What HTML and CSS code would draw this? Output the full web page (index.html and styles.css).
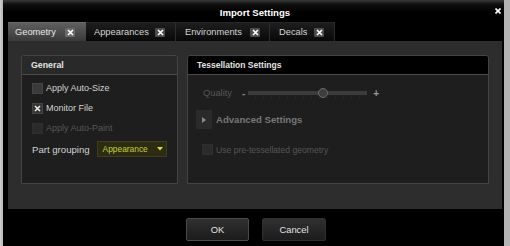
FILE: index.html
```html
<!DOCTYPE html>
<html>
<head>
<meta charset="utf-8">
<link rel="stylesheet" href="styles.css">
</head>
<body>
<div class="dialog">
  <div class="titlebar">
    <span></span>
    <span class="title">Import Settings</span>
    <span class="close"><svg width="6" height="6" viewBox="0 0 6 6"><path d="M0.5 0.5L5.5 5.5M5.5 0.5L0.5 5.5" stroke="#fff" stroke-width="1.6"/></svg></span>
  </div>
  <div class="tabs">
    <div class="tab active t-geo"><span>Geometry</span><span class="tx"><svg width="7" height="7" viewBox="0 0 7 7"><path d="M1 1L6 6M6 1L1 6" stroke="#fff" stroke-width="1.6"/></svg></span></div>
    <div class="tab t-app"><span>Appearances</span><span class="tx"><svg width="7" height="7" viewBox="0 0 7 7"><path d="M1 1L6 6M6 1L1 6" stroke="#fff" stroke-width="1.6"/></svg></span></div>
    <div class="tab t-env"><span>Environments</span><span class="tx"><svg width="7" height="7" viewBox="0 0 7 7"><path d="M1 1L6 6M6 1L1 6" stroke="#fff" stroke-width="1.6"/></svg></span></div>
    <div class="tab t-dec"><span>Decals</span><span class="tx"><svg width="7" height="7" viewBox="0 0 7 7"><path d="M1 1L6 6M6 1L1 6" stroke="#fff" stroke-width="1.6"/></svg></span></div>
  </div>
  <div class="panel">
    <div class="group general">
      <div class="ghead">General</div>
      <div class="gbody">
        <div class="row"><span class="cb"></span><span>Apply Auto-Size</span></div>
        <div class="row"><span class="cb checked"><svg width="7" height="7" viewBox="0 0 7 7"><path d="M1 1L6 6M6 1L1 6" stroke="#eee" stroke-width="1.5"/></svg></span><span>Monitor File</span></div>
        <div class="row disabled"><span class="cb dis"></span><span>Apply Auto-Paint</span></div>
        <div class="row grouping"><span class="plabel">Part grouping</span><span class="dropdown"><span>Appearance</span><svg width="6" height="4" viewBox="0 0 6 4"><path d="M0 0H6L3 3.5Z" fill="#d6de3c"/></svg></span></div>
      </div>
    </div>
    <div class="group tess">
      <div class="ghead black">Tessellation Settings</div>
      <div class="tbody">
        <div class="quality"><span class="qlabel">Quality</span><span class="pm minus">-</span><span class="slider"><span class="thumb"></span></span><span class="pm plus">+</span></div>
        <div class="adv"><span class="advbtn"><svg width="4" height="6" viewBox="0 0 4 6"><path d="M0 0L4 3L0 6Z" fill="#8a8a8a"/></svg></span><span class="advtext">Advanced Settings</span></div>
        <div class="pre"><span class="cb dis"></span><span>Use pre-tessellated geometry</span></div>
      </div>
    </div>
  </div>
  <div class="footer">
    <button class="btn ok">OK</button>
    <button class="btn cancel">Cancel</button>
  </div>
</div>
</body>
</html>
```
FILE: styles.css
```css
html, body {
  margin: 0;
  padding: 0;
}
body {
  width: 510px;
  height: 246px;
  overflow: hidden;
  background: linear-gradient(90deg, #d0d0d0 0, #b4b4b4 3px, #b4b4b4 100%);
  font-family: "Liberation Sans", Arial, sans-serif;
  font-size: 9px;
  color: #d8d8d8;
}
.dialog {
  margin-left: 3px;
  width: 501px;
  height: 246px;
  background: #000;
  display: flex;
  flex-direction: column;
}
.titlebar {
  height: 22px;
  flex: none;
  display: grid;
  grid-template-columns: 1fr auto 1fr;
  align-items: center;
  padding-left: 3px;
  background: linear-gradient(#3a3a3a 0, #111 4px, #000 12px);
}
.title {
  font-weight: bold;
  font-size: 9.6px;
  color: #fff;
  padding-top: 2px;
}
.close {
  justify-self: end;
  margin-right: 3px;
  display: flex;
}
.tabs {
  height: 19px;
  flex: none;
  display: flex;
  padding-left: 5px;
}
.tab {
  box-sizing: border-box;
  display: flex;
  align-items: center;
  justify-content: space-between;
  padding: 0 10px 0 8px;
  font-size: 9.3px;
  color: #d4d4d4;
  background: linear-gradient(#1e1e1e, #080808);
  border-right: 1px solid #2c2c2c;
  border-top: 1px solid #262626;
}
.t-geo { width: 78px; padding-left: 7px; padding-right: 11px; }
.t-app { width: 90px; }
.t-env { width: 94px; padding-left: 9px; padding-right: 9px; }
.t-dec { width: 65px; padding-left: 9px; }
.tab.active {
  background: linear-gradient(#5e5e5e, #3a3a3a);
  border-top-color: #6a6a6a;
  border-right: none;
  color: #e6e6e6;
}
.tx {
  width: 10px;
  height: 9px;
  background: #4c4c4c;
  border-radius: 1px;
  display: flex;
  align-items: center;
  justify-content: center;
}
.tab.active .tx {
  background: #6a6a6a;
}
.panel {
  height: 168px;
  flex: none;
  margin: 0 2px 0 5px;
  background: #2d2d2d;
  padding: 14px 13px 0;
  box-sizing: border-box;
  display: flex;
  gap: 9px;
}
.group {
  height: 129px;
  box-sizing: border-box;
  border: 1px solid #444;
  border-radius: 3px 3px 0 0;
  background: #1e1e1e;
  display: flex;
  flex-direction: column;
}
.general {
  width: 157px;
  flex: none;
}
.tess {
  flex: 1;
}
.ghead {
  height: 19px;
  box-sizing: border-box;
  border-bottom: 1px solid #4a4a4a;
  background: #292929;
  font-weight: bold;
  font-size: 8.8px;
  color: #e4e4e4;
  display: flex;
  align-items: center;
  padding-left: 9px;
  border-radius: 2px 2px 0 0;
}
.ghead.black {
  background: #000;
  font-size: 8.5px;
}
.gbody {
  padding: 3px 0 0 10px;
  display: flex;
  flex-direction: column;
}
.row {
  height: 20px;
  display: flex;
  align-items: center;
  gap: 3px;
  color: #d2d2d2;
}
.row.disabled {
  color: #555;
}
.cb {
  width: 11px;
  height: 11px;
  box-sizing: border-box;
  background: #3a3a3a;
  border: 1px solid #444;
  display: flex;
  align-items: center;
  justify-content: center;
  flex: none;
}
.cb.checked {
  background: #353535;
}
.cb.dis {
  background: #2b2b2b;
  border-color: #2f2f2f;
}
.row.grouping {
  height: 22px;
  gap: 7px;
}
.plabel {
  font-size: 9.6px;
}
.dropdown {
  width: 70px;
  height: 16px;
  box-sizing: border-box;
  background: #2c2c12;
  border: 1px solid #3e3e1c;
  color: #c6d038;
  font-size: 8.4px;
  display: flex;
  align-items: center;
  justify-content: space-between;
  padding: 0 3px 0 5px;
}
.tbody {
  display: flex;
  flex-direction: column;
}
.quality {
  margin-top: 10px;
  height: 16px;
  display: flex;
  align-items: center;
  padding-left: 15px;
  color: #555;
}
.qlabel {
  font-size: 9.3px;
}
.pm {
  color: #888;
  font-size: 10px;
  font-weight: bold;
}
.minus {
  margin-left: 10px;
}
.slider {
  position: relative;
  width: 119px;
  height: 16px;
  margin-left: 3px;
  background:
    linear-gradient(#3c3c3c, #3c3c3c) 0 6px / 119px 4px no-repeat,
    repeating-linear-gradient(90deg, transparent 0 7px, #353535 7px 8px) 0 12px / 112px 1px no-repeat;
  border-radius: 2px;
}
.thumb {
  position: absolute;
  left: 70px;
  top: 3px;
  width: 10px;
  height: 10px;
  box-sizing: border-box;
  border-radius: 50%;
  background: #3e3e3e;
  border: 1.5px solid #6c6c6c;
}
.plus {
  margin-left: 6px;
  color: #9a9a9a;
}
.adv {
  margin-top: 9px;
  height: 19px;
  display: flex;
  align-items: center;
  padding-left: 8px;
  gap: 4px;
}
.advbtn {
  width: 16px;
  height: 19px;
  background: #2a2a2a;
  display: flex;
  align-items: center;
  justify-content: center;
}
.advtext {
  font-weight: bold;
  font-size: 9.6px;
  color: #777;
}
.pre {
  margin-top: 15px;
  height: 11px;
  display: flex;
  align-items: center;
  gap: 3px;
  padding-left: 14px;
  color: #555;
  font-size: 8.6px;
}
.footer {
  flex: 1;
  display: flex;
  justify-content: center;
  align-items: flex-start;
  gap: 13px;
  padding: 9px 0 0 5px;
}
.btn {
  height: 23px;
  width: 63px;
  box-sizing: border-box;
  border: 1px solid #4a4a4a;
  border-radius: 2px;
  background: linear-gradient(#303030, #1c1c1c);
  color: #e2e2e2;
  font-family: "Liberation Sans", Arial, sans-serif;
  font-size: 9.4px;
  padding: 0;
}
.btn.cancel {
  width: 64px;
  border-color: #2e2e2e;
}
```
